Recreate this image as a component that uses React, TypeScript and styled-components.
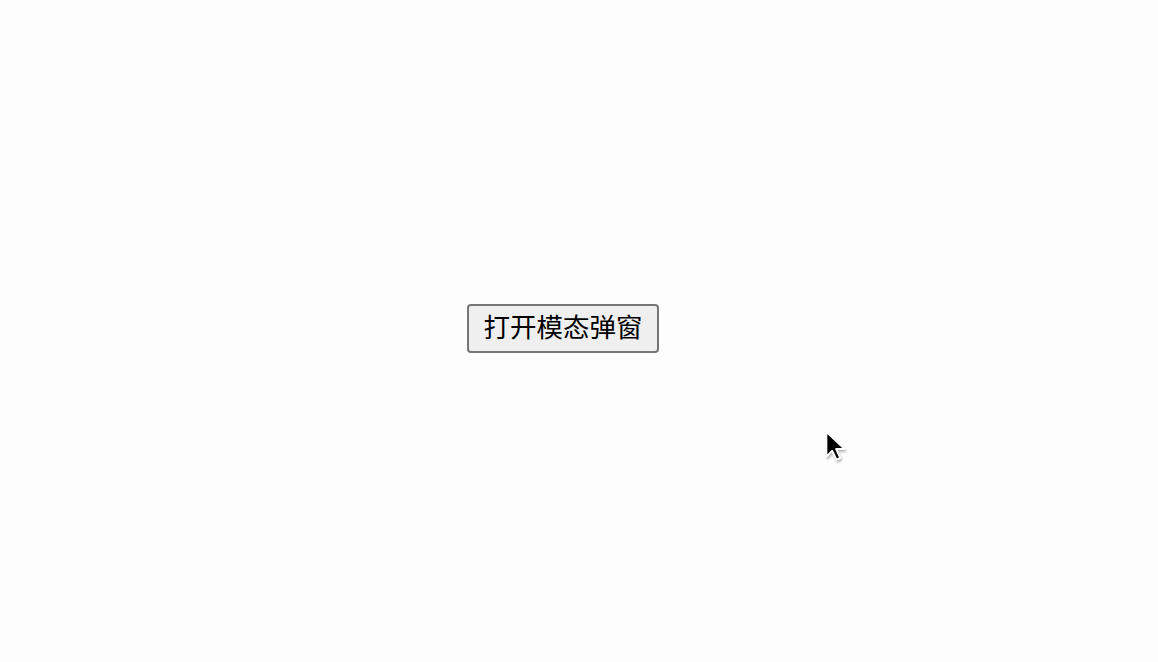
import React, { useState } from 'react';
import styled, { createGlobalStyle } from 'styled-components';

const GlobalStyle = createGlobalStyle`
html, body {
    margin: 0;
    padding: 0;
    background: #fdfdfd;
    font-family: "Liberation Sans", "Noto Sans CJK SC", sans-serif;
}
`

const Page = styled.div`
height: 100vh;
display: flex;
align-items: center;
justify-content: center;
padding: 0 32px 5px 0;
box-sizing: border-box;
position: relative;
overflow: hidden;
`

const OpenButton = styled.button`
width: 192px;
height: 49px;
padding: 0 0 5px;
font-family: "Noto Sans CJK SC", sans-serif;
font-size: 26.5px;
font-weight: 400;
line-height: 1;
color: #000;
background: #efefef;
border: 2px solid #767676;
border-radius: 4px;
cursor: default;
`

const Cursor = styled.svg`
position: absolute;
left: 823px;
top: 430px;
width: 28px;
height: 40px;
pointer-events: none;
`

export default function App() {
    const [open, setOpen] = useState(false)
    return (
        <>
            <GlobalStyle />
            <Page>
                <OpenButton onClick={() => setOpen(!open)}>打开模态弹窗</OpenButton>
                <Cursor viewBox="0 0 26 38">
                    <defs>
                        <filter id="shadow" x="-30%" y="-30%" width="160%" height="160%">
                            <feDropShadow dx="1" dy="2" stdDeviation="1" floodColor="#000" floodOpacity="0.3" />
                        </filter>
                    </defs>
                    <path
                        d="M3 2 L3 25 L8.5 19.5 L12.5 28 L16 26.5 L12 18 L20 18 Z"
                        fill="#000"
                        stroke="#fff"
                        strokeWidth="1.6"
                        strokeLinejoin="round"
                        filter="url(#shadow)"
                    />
                </Cursor>
            </Page>
        </>
    );
}
